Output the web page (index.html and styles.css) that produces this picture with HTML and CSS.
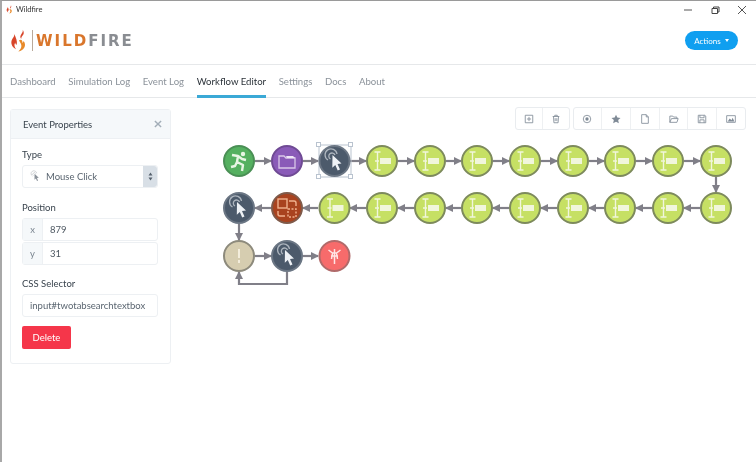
FILE: index.html
```html
<!DOCTYPE html>
<html lang="en">
<head>
<meta charset="utf-8">
<title>Wildfire</title>
<link rel="stylesheet" href="styles.css">
</head>
<body>
<svg class="defs" width="0" height="0" aria-hidden="true">
  <defs>
    <symbol id="flame" viewBox="0 0 24 32">
      <path fill="#d8452a" d="M5 6C7 10 3 12 2 16c-1 5 2 9 6 11-2-3-3-6-1-9 0 2 1 3 2 3 1-5-1-10-4-15z"/>
      <path fill="#e88a2a" d="M12 15c1 3 4 5 3 9-.4 2-2 4-4 6 5-1 9-4 9-9 0-2-1-4-2-5 0 1-.5 2-1.500 2.500C17 15 15 13 12 15z"/>
      <path fill="#d8452a" d="M17 1c1 3-2 5-3 8-.6 2 0 3 1 4 0-3 2-4 3-6 .7-2 .3-4-1-6z"/>
    </symbol>
    <symbol id="i-click" viewBox="0 0 32 32">
      <path fill="none" stroke="currentColor" stroke-width="1.300" opacity=".6" d="M9.500 15a6 6 0 1 1 9-6M12 14a3.200 3.200 0 1 1 4.500-4"/>
      <path fill="currentColor" d="M14 10l9 8.500-4 .6 2.500 5.400-2.300 1-2.400-5.400-3 2.700z"/>
    </symbol>
    <symbol id="i-text" viewBox="0 0 32 32">
      <path fill="none" stroke="#f1f6dc" stroke-width="1.400" d="M8.500 7h6M8.500 25h6M11.500 7v18M9 16h4"/>
      <rect x="14" y="13" width="11" height="6" fill="#f1f6dc"/>
    </symbol>
    <symbol id="i-run" viewBox="0 0 32 32">
      <circle cx="20" cy="9" r="2.200" fill="#e8f5e4"/>
      <path fill="none" stroke="#e8f5e4" stroke-width="2.400" stroke-linejoin="round" d="M9 10l6 1 4 3 4 1M15 11l-1 6 6 3-1 6M14 17l-2 4-4 1"/>
    </symbol>
    <symbol id="i-folder" viewBox="0 0 32 32">
      <path fill="none" stroke="#d9c8e8" stroke-width="1.300" d="M8 23V11h5l2 2h9v10z"/>
      <path fill="#efe6f6" d="M15 11h7l2 2H16z"/>
    </symbol>
    <symbol id="i-swap" viewBox="0 0 32 32">
      <g fill="none" stroke="#f0b18e" stroke-width="1.400">
        <rect x="7" y="7" width="9" height="9"/>
        <rect x="17" y="17" width="8" height="8" stroke-dasharray="2 1.500"/>
        <path d="M18 9h5a2 2 0 0 1 2 2v3M14 24H9a2 2 0 0 1-2-2v-3"/>
      </g>
    </symbol>
    <symbol id="i-warn" viewBox="0 0 32 32">
      <rect x="15" y="9" width="2" height="9" fill="#f3eddc"/>
      <rect x="15" y="20" width="2" height="3" fill="#f3eddc"/>
    </symbol>
    <symbol id="i-stop" viewBox="0 0 32 32">
      <path fill="none" stroke="#ffe4e4" stroke-width="1.500" d="M10 10l4 3h4l4-3M16 9v15M14 13l-1 6M18 13l1 6M12.500 16h7"/>
    </symbol>
    <marker id="arr" viewBox="0 0 8 8" refX="7" refY="4" markerWidth="8" markerHeight="8" markerUnits="userSpaceOnUse" orient="auto">
      <path d="M0 0L8 4L0 8z" fill="#807f88"/>
    </marker>
  </defs>
</svg>

<div class="window">
  <div class="titlebar">
    <div class="app-title">
      <svg class="title-flame"><use href="#flame"/></svg>
      <span>Wildfire</span>
    </div>
    <div class="win-controls">
      <svg width="10" height="10" viewBox="0 0 10 10"><path d="M1 5h8" stroke="#555" fill="none"/></svg>
      <svg width="10" height="10" viewBox="0 0 10 10"><path d="M2 3.500h5.500v5H2zM3.500 3.500V2H9v5H7.500" stroke="#444" fill="none"/></svg>
      <svg width="10" height="10" viewBox="0 0 10 10"><path d="M1 1l8 8M9 1l-8 8" stroke="#555" fill="none"/></svg>
    </div>
  </div>

  <header class="brand-bar">
    <div class="logo">
      <svg class="logo-flame"><use href="#flame"/></svg>
      <span class="logo-sep"></span>
      <span class="logo-text"><span class="logo-wild">WILD</span><span class="logo-fire">FIRE</span></span>
    </div>
    <button class="actions">Actions <span class="caret"></span></button>
  </header>

  <nav class="tabs">
    <a class="tab">Dashboard</a>
    <a class="tab">Simulation Log</a>
    <a class="tab">Event Log</a>
    <a class="tab active">Workflow Editor</a>
    <a class="tab">Settings</a>
    <a class="tab">Docs</a>
    <a class="tab">About</a>
  </nav>

  <main class="content">
    <aside class="panel">
      <div class="panel-head">
        <span>Event Properties</span>
        <svg width="8" height="8" viewBox="0 0 9 9"><path d="M1 1l7 7M8 1l-7 7" stroke="#a3aeb8" stroke-width="1.600" fill="none"/></svg>
      </div>
      <div class="panel-body">
        <label class="field-label">Type</label>
        <div class="select">
          <span class="select-value">
            <svg class="select-icon"><use href="#i-click"/></svg>
            Mouse Click
          </span>
          <span class="select-arrow">
            <svg width="5" height="9" viewBox="0 0 5 9"><path d="M2.500 0.500L4.500 3.500H.5zM2.500 8.500L.5 5.500H4.500z" fill="#55606c"/></svg>
          </span>
        </div>
        <label class="field-label">Position</label>
        <div class="input-group">
          <span class="addon">x</span>
          <span class="input-value">879</span>
        </div>
        <div class="input-group">
          <span class="addon">y</span>
          <span class="input-value">31</span>
        </div>
        <label class="field-label">CSS Selector</label>
        <div class="text-input">input#twotabsearchtextbox</div>
        <button class="delete">Delete</button>
      </div>
    </aside>

    <section class="editor">
      <div class="toolbar">
        <div class="btn-group narrow">
          <span class="tool"><svg viewBox="0 0 12 12"><path d="M1.500 1.500h9v9h-9zM6 3.500v5M3.500 6h5" /></svg></span>
          <span class="tool"><svg viewBox="0 0 12 12"><path d="M2 3h8M4.500 3V1.500h3V3M3 3l.5 7.500h5L9 3M5 5v3.500M7 5v3.500"/></svg></span>
        </div>
        <div class="btn-group">
          <span class="tool"><svg viewBox="0 0 12 12"><circle cx="6" cy="6" r="4.500"/><circle class="fill" cx="6" cy="6" r="2"/></svg></span>
          <span class="tool"><svg viewBox="0 0 12 12"><path class="fill" d="M6 .8l1.600 3.500 3.800.4-2.800 2.600.8 3.800L6 9.200l-3.400 1.900.8-3.800L.6 4.700l3.800-.4z"/></svg></span>
          <span class="tool"><svg viewBox="0 0 12 12"><path d="M2 .8h5.500L10 3.500v7.700H2zM7.500 .8v2.700H10"/></svg></span>
          <span class="tool"><svg viewBox="0 0 12 12"><path d="M1 10V2.500h3.500l1 1.200H9.500V5.500M1 10l2-4.500h8L9.500 10z"/></svg></span>
          <span class="tool"><svg viewBox="0 0 12 12"><path d="M1.500 1.500h8l1 1v8h-9zM3.500 1.500v3h5v-3M3.500 10.500V7h5v3.500"/></svg></span>
          <span class="tool"><svg viewBox="0 0 12 12"><path d="M.8 2h10.400v8H.8z"/><path class="fill" d="M2 9l2.500-3.500L6.500 7.500 8 4.500 10 9z"/></svg></span>
        </div>
      </div>

      <svg class="graph" viewBox="171 0 585 340" aria-label="Workflow graph">
        <g fill="none" stroke="#807f88" stroke-width="2.200" marker-end="url(#arr)" id="edges">
          <path d="M255 47H271"/><path d="M303 47H318"/><path d="M350 47H366"/><path d="M398 47H414"/><path d="M446 47H461"/><path d="M493 47H509"/><path d="M541 47H557"/><path d="M589 47H604"/><path d="M636 47H652"/><path d="M684 47H700"/>
          <path d="M716 63V78"/>
          <path d="M700 94H684"/><path d="M652 94H636"/><path d="M604 94H589"/><path d="M557 94H541"/><path d="M509 94H493"/><path d="M461 94H446"/><path d="M414 94H398"/><path d="M366 94H350"/><path d="M318 94H303"/><path d="M271 94H255"/>
          <path d="M239 110V126"/>
          <path d="M255 142H271"/><path d="M303 142H318"/>
          <path d="M287 158V170H239V158"/>
        </g>

        <rect x="319" y="31" width="32" height="32" fill="none" stroke="#b9c3cf" stroke-width="1"/>
        <g fill="#fff" stroke="#b9c3cf">
          <rect x="316.500" y="28.500" width="4" height="4"/><rect x="348.500" y="28.500" width="4" height="4"/>
          <rect x="316.500" y="60.500" width="4" height="4"/><rect x="348.500" y="60.500" width="4" height="4"/>
        </g>

        <g stroke-width="2">
          <g class="n-green"><circle cx="239" cy="47" r="15"/><use href="#i-run" x="223" y="31" width="32" height="32"/></g>
          <g class="n-purple"><circle cx="287" cy="47" r="15"/><use href="#i-folder" x="271" y="31" width="32" height="32"/></g>
          <g class="n-slate"><circle cx="334.500" cy="47" r="15"/><use href="#i-click" x="318.500" y="31" width="32" height="32"/></g>
          <g class="n-lime">
            <circle cx="382" cy="47" r="15"/><use href="#i-text" x="366" y="31" width="32" height="32"/>
            <circle cx="430" cy="47" r="15"/><use href="#i-text" x="414" y="31" width="32" height="32"/>
            <circle cx="477" cy="47" r="15"/><use href="#i-text" x="461" y="31" width="32" height="32"/>
            <circle cx="525" cy="47" r="15"/><use href="#i-text" x="509" y="31" width="32" height="32"/>
            <circle cx="573" cy="47" r="15"/><use href="#i-text" x="557" y="31" width="32" height="32"/>
            <circle cx="620" cy="47" r="15"/><use href="#i-text" x="604" y="31" width="32" height="32"/>
            <circle cx="668" cy="47" r="15"/><use href="#i-text" x="652" y="31" width="32" height="32"/>
            <circle cx="716" cy="47" r="15"/><use href="#i-text" x="700" y="31" width="32" height="32"/>
            <circle cx="716" cy="94" r="15"/><use href="#i-text" x="700" y="78" width="32" height="32"/>
            <circle cx="668" cy="94" r="15"/><use href="#i-text" x="652" y="78" width="32" height="32"/>
            <circle cx="620" cy="94" r="15"/><use href="#i-text" x="604" y="78" width="32" height="32"/>
            <circle cx="573" cy="94" r="15"/><use href="#i-text" x="557" y="78" width="32" height="32"/>
            <circle cx="525" cy="94" r="15"/><use href="#i-text" x="509" y="78" width="32" height="32"/>
            <circle cx="477" cy="94" r="15"/><use href="#i-text" x="461" y="78" width="32" height="32"/>
            <circle cx="430" cy="94" r="15"/><use href="#i-text" x="414" y="78" width="32" height="32"/>
            <circle cx="382" cy="94" r="15"/><use href="#i-text" x="366" y="78" width="32" height="32"/>
            <circle cx="334.500" cy="94" r="15"/><use href="#i-text" x="318.500" y="78" width="32" height="32"/>
          </g>
          <g class="n-rust"><circle cx="287" cy="94" r="15"/><use href="#i-swap" x="271" y="78" width="32" height="32"/></g>
          <g class="n-slate"><circle cx="239" cy="94" r="15"/><use href="#i-click" x="223" y="78" width="32" height="32"/></g>
          <g class="n-sand"><circle cx="239" cy="142" r="15"/><use href="#i-warn" x="223" y="126" width="32" height="32"/></g>
          <g class="n-slate"><circle cx="287" cy="142" r="15"/><use href="#i-click" x="271" y="126" width="32" height="32"/></g>
          <g class="n-red"><circle cx="334.500" cy="142" r="15"/><use href="#i-stop" x="318.500" y="126" width="32" height="32"/></g>
        </g>
      </svg>
    </section>
  </main>
</div>
</body>
</html>
```
FILE: styles.css
```css
* { box-sizing: border-box; }
html, body { margin: 0; padding: 0; height: 100%; }
body { font-family: Lato, "Open Sans", sans-serif; color: #3b4651; background: #fff; overflow: hidden; }
.defs { position: absolute; }

.window { height: 462px; display: flex; flex-direction: column; border-top: 1px solid #9a9a9a; border-left: 2px solid #a8a8a8; background: #fff; filter: blur(.3px); }

.titlebar { height: 16px; display: flex; justify-content: space-between; align-items: center; padding: 1px 9px 0 4px; flex: none; }
.app-title { display: flex; align-items: center; gap: 3px; font-size: 7.500px; color: #333; }
.title-flame { width: 7px; height: 9px; }
.win-controls { display: flex; gap: 17px; }

.brand-bar { height: 48px; display: flex; justify-content: space-between; align-items: center; padding: 0 18px 0 8px; border-bottom: 1px solid #e6e8ea; flex: none; }
.logo { display: flex; align-items: center; }
.logo-flame { width: 18px; height: 24px; }
.logo-sep { width: 1px; height: 21px; background: #b9a99a; margin: 0 3px 0 4px; }
.logo-text { font-family: "DejaVu Sans", sans-serif; font-weight: 700; font-size: 15px; letter-spacing: 2px; }
.logo-wild { color: #d9762c; }
.logo-fire { color: #8a8d92; }
.actions { height: 19px; width: 53px; border: none; border-radius: 10px; background: #109ff0; color: #fff; font: 8px Lato, sans-serif; padding: 0; display: flex; align-items: center; justify-content: center; gap: 4px; }
.caret { width: 0; height: 0; border-left: 2.500px solid transparent; border-right: 2.500px solid transparent; border-top: 3px solid #fff; }

.tabs { height: 33px; display: flex; gap: 12.600px; padding-left: 8px; border-bottom: 1px solid #e6e8ea; flex: none; font-size: 9.600px; }
.tab { color: #8b929a; line-height: 34px; height: 33px; }
.tab.active { color: #2c333a; border-bottom: 3px solid #3ba9d6; }

.content { flex: 1; display: flex; min-height: 0; padding: 11px 0 0 8px; position: relative; }

.panel { width: 161px; height: 255px; border: 1px solid #edf0f3; border-radius: 3px; flex: none; }
.panel-head { height: 29px; background: #f5f8fa; border-bottom: 1px solid #edf0f3; display: flex; align-items: center; justify-content: space-between; padding: 0 8px 0 12px; font-size: 9.500px; color: #39434d; }
.panel-body { padding: 10px 12px 0 11px; display: flex; flex-direction: column; }
.field-label { font-size: 9.500px; line-height: 12px; color: #39434d; margin-bottom: 4px; }
.select { height: 23px; display: flex; border: 1px solid #edf0f3; border-radius: 3px; margin-bottom: 14px; font-size: 9.500px; color: #5a6570; }
.select-value { flex: 1; display: flex; align-items: center; gap: 3px; padding-left: 5px; }
.select-icon { width: 15px; height: 15px; color: #8b929a; }
.select-arrow { width: 14px; background: #d8dfe6; display: flex; align-items: center; justify-content: center; border-radius: 0 3px 3px 0; }
.input-group { height: 23px; display: flex; border: 1px solid #edf0f3; border-radius: 3px; margin-bottom: 1px; font-size: 9.500px; }
.addon { width: 20px; background: #f5f8fa; border-right: 1px solid #edf0f3; color: #7b8590; display: flex; align-items: center; justify-content: center; }
.input-value { padding-left: 7px; line-height: 21px; color: #4d5761; }
.input-group + .field-label { margin-top: 12px; }
.text-input { height: 23px; border: 1px solid #edf0f3; border-radius: 3px; font-size: 9.500px; line-height: 21px; padding-left: 7px; color: #5a6570; white-space: nowrap; overflow: hidden; }
.delete { width: 49px; height: 23px; margin-top: 9px; border: none; border-radius: 2px; background: #f5364a; color: #fff; font: 9.500px Lato, sans-serif; padding: 0; }

.editor { flex: 1; position: relative; min-width: 0; }
.toolbar { position: absolute; top: -2px; right: 10px; display: flex; gap: 3px; }
.btn-group { display: flex; height: 23px; border: 1px solid #e9ecef; border-radius: 3px; }
.tool { width: 28.800px; display: flex; align-items: center; justify-content: center; border-left: 1px solid #eef0f2; }
.tool:first-child { border-left: none; width: 27.500px; }
.narrow .tool { width: 26.500px; }
.tool svg { width: 10px; height: 10px; fill: none; stroke: #7f8a96; stroke-width: 1; }
.tool svg .fill { fill: #7f8a96; stroke: none; }

.graph { position: absolute; left: 0; top: 5px; width: 585px; height: 340px; }
.n-green { fill: #55b060; stroke: #4a8f55; }
.n-purple { fill: #8a5bb8; stroke: #6f4a94; }
.n-slate { fill: #4c5a6b; stroke: #6b7684; color: #eef1f5; }
.n-lime { fill: #c6e064; stroke: #7d8a5c; }
.n-rust { fill: #a9431f; stroke: #7f5a4a; }
.n-sand { fill: #d6cdb0; stroke: #8d8a7c; }
.n-red { fill: #f76b6b; stroke: #b06a6a; }
.n-green use, .n-purple use, .n-slate use, .n-lime use, .n-rust use, .n-sand use, .n-red use { stroke: none; }
```
